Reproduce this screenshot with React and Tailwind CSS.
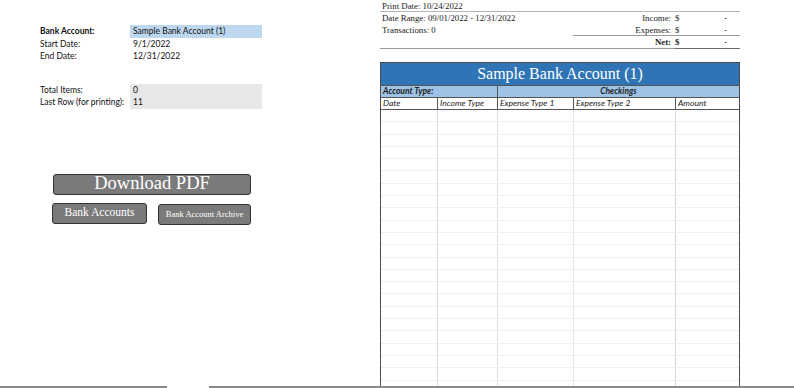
import React from "react";

const COLS = [
  { label: "Date", w: "w-[57px]", line: "border-[#dcdcdc]" },
  { label: "Income Type", w: "w-[60px]", line: "border-[#dcdcdc]" },
  { label: "Expense Type 1", w: "w-[76px]", line: "border-[#e6e6e6]" },
  { label: "Expense Type 2", w: "w-[102px]", line: "border-[#d6d6d6]" },
  { label: "Amount", w: "w-[62px]", line: "border-transparent" },
];

const ROWS = Array.from({ length: 23 });

const sans = "font-['Lato','Liberation_Sans',sans-serif]";
const serif = "font-['Liberation_Serif',serif]";

function InfoRow({ label, value, bold, cell }) {
  return (
    <div className="grid grid-cols-[90px_132px] h-[12.5px] items-center">
      <span className={bold ? "font-bold" : ""}>{label}</span>
      <span className={`h-[12.5px] leading-[12.5px] pl-[3px] ${cell || ""}`}>{value}</span>
    </div>
  );
}

function Button({ children, className }) {
  return (
    <div
      className={`bg-[#7a7a7a] border border-[#333] rounded-[3px] text-white flex items-center justify-center ${serif} ${className}`}
    >
      {children}
    </div>
  );
}

export default function App() {
  return (
    <div className="w-[794px] h-[388px] bg-white overflow-hidden flex flex-col text-black">
      <div className="h-[386px] flex">
        {/* left panel */}
        <div className={`w-[380px] ${sans} text-[8.5px] text-[#111]`}>
          <div className="pl-[40px] pt-[25px]">
            <InfoRow label="Bank Account:" value="Sample Bank Account (1)" bold cell="bg-[#bdd7ee]" />
            <InfoRow label="Start Date:" value="9/1/2022" />
            <InfoRow label="End Date:" value="12/31/2022" />
            <div className="h-[21px]" />
            <InfoRow label="Total Items:" value="0" cell="bg-[#e7e7e7]" />
            <InfoRow label="Last Row (for printing):" value="11" cell="bg-[#e7e7e7]" />
          </div>

          <div className="pl-[53px] pt-[65px] flex flex-col gap-[8px]">
            <Button className="w-[198px] h-[21px] text-[18.5px]">Download PDF</Button>
            <div className="flex gap-[11px] -ml-[1px]">
              <Button className="w-[95px] h-[21px] text-[11.5px]">Bank Accounts</Button>
              <Button className="w-[93px] h-[21px] text-[8.5px] mt-[1px]">Bank Account Archive</Button>
            </div>
          </div>
        </div>

        {/* right panel */}
        <div className="w-[360px] flex flex-col">
          <div className={`${serif} text-[8.8px] text-[#222] h-[62px]`}>
            <div className="h-[12px] leading-[12px] pl-[2px] border-b border-[#b5b5b5]">
              Print Date: 10/24/2022
            </div>
            <div className="grid grid-cols-[193px_102px_65px]">
              <div className="h-[12px] leading-[12px] pl-[2px]">Date Range: 09/01/2022 - 12/31/2022</div>
              <div className="h-[12px] leading-[12px] text-right pr-[4px]">Income:</div>
              <div className="h-[12px] leading-[12px] flex justify-between pr-[13px]">
                <span>$</span>
                <span>-</span>
              </div>
              <div className="h-[12px] leading-[12px] pl-[2px]">Transactions: 0</div>
              <div className="h-[12px] leading-[12px] text-right pr-[4px] border-b border-[#9a9a9a]">Expenses:</div>
              <div className="h-[12px] leading-[12px] flex justify-between pr-[13px] border-b border-[#9a9a9a]">
                <span>$</span>
                <span>-</span>
              </div>
              <div className="h-[13px] leading-[13px] border-b border-[#9a9a9a]" />
              <div className="h-[13px] leading-[13px] text-right pr-[4px] font-bold border-b border-[#9a9a9a]">Net:</div>
              <div className="h-[13px] leading-[13px] flex justify-between pr-[13px] font-bold border-b border-[#6a6a6a]">
                <span>$</span>
                <span className="font-normal">-</span>
              </div>
            </div>
          </div>

          {/* table */}
          <div className="w-[360px] flex-1 border-x border-t border-[#4a4a4a] overflow-hidden flex flex-col">
            <div className={`h-[23px] bg-[#2f75b6] text-white text-[16px] leading-[22px] text-center ${serif}`}>
              Sample Bank Account (1)
            </div>
            <div className={`h-[12px] bg-[#9dc3e6] flex ${sans} text-[8.5px] font-bold italic text-[#1f1f1f] border-t border-[#555]`}>
              <div className="w-[117px] pl-[2px] leading-[11px] border-r border-[#555]">Account Type:</div>
              <div className="flex-1 text-center leading-[11px]">Checkings</div>
            </div>
            <div className={`h-[12px] flex ${sans} text-[8.5px] italic text-[#222] border-y border-[#555] box-content`}>
              {COLS.map((c, i) => (
                <div
                  key={c.label}
                  className={`${c.w} shrink-0 pl-[2px] leading-[11px] ${i < COLS.length - 1 ? "border-r border-[#555]" : ""}`}
                >
                  {c.label}
                </div>
              ))}
            </div>
            {ROWS.map((_, r) => (
              <div key={r} className="h-[12.3px] flex border-b border-[#efefef] shrink-0">
                {COLS.map((c) => (
                  <div key={c.label} className={`${c.w} shrink-0 border-r ${c.line}`} />
                ))}
              </div>
            ))}
          </div>
        </div>
      </div>

      {/* bottom edge */}
      <div className="h-[2px] flex">
        <div className="w-[167px] bg-[#8a8a8a]" />
        <div className="w-[42px]" />
        <div className="flex-1 bg-[#8a8a8a]" />
      </div>
    </div>
  );
}
